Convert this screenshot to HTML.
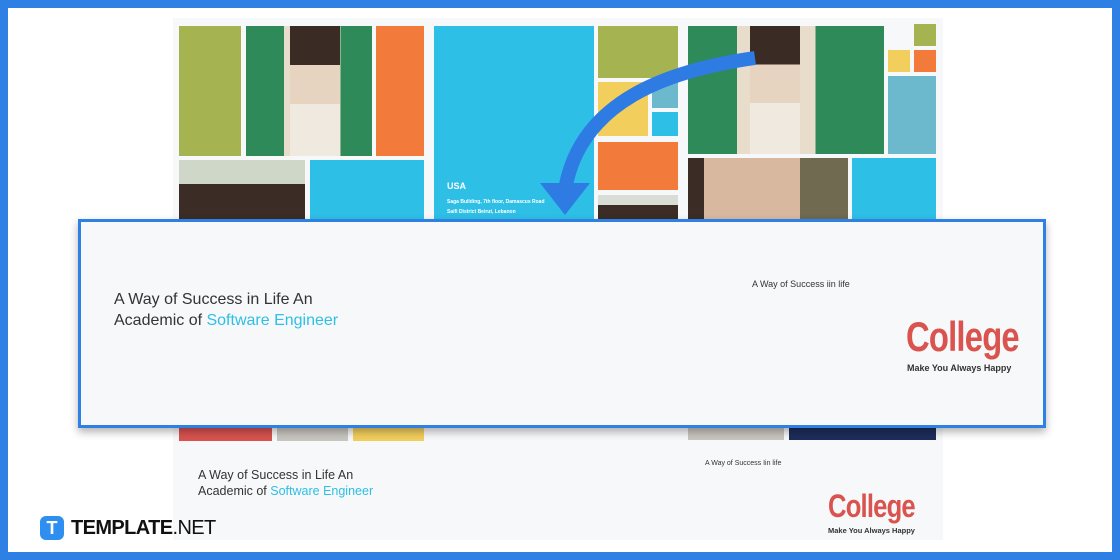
<!DOCTYPE html>
<html><head><meta charset="utf-8"><style>
*{margin:0;padding:0;box-sizing:border-box}
body{width:1120px;height:560px;position:relative;overflow:hidden;background:#fff;font-family:"Liberation Sans",sans-serif}
.a{position:absolute}
.frame{left:0;top:0;width:1120px;height:560px;border:8px solid #2f80e4}
.card{left:173px;top:18px;width:770px;height:522px;background:#f7f8f9}
.t{color:#333}
.c{color:#d9534f;font-weight:bold;letter-spacing:-1px;transform-origin:0 0;white-space:nowrap}
</style></head><body>
<div class="a card"></div>
<div class="a" style="left:179px;top:26px;width:62px;height:130px;background:#a5b350"></div>
<div class="a" style="left:246px;top:26px;width:126px;height:130px;background:linear-gradient(90deg,#2f8a5a 0 30%,#e8dccb 30% 75%,#2f8a5a 75%)"></div>
<div class="a" style="left:290px;top:26px;width:50px;height:130px;background:linear-gradient(#3a2b25 0 30%,#e6d3c0 30% 60%,#efe9e0 60%)"></div>
<div class="a" style="left:376px;top:26px;width:48px;height:130px;background:#f27a3a"></div>
<div class="a" style="left:179px;top:160px;width:126px;height:60px;background:linear-gradient(#cfd7c8 0 40%,#3b2c25 40%)"></div>
<div class="a" style="left:310px;top:160px;width:114px;height:60px;background:#2dbfe5"></div>
<div class="a" style="left:434px;top:26px;width:160px;height:194px;background:#2dbfe5"></div>
<div class="a" style="left:447px;top:181px;color:#fff;font-size:9px;font-weight:bold">USA</div>
<div class="a" style="left:447px;top:197px;color:#fff;font-size:5px;font-weight:bold;line-height:10px">Saga Building, 7th floor, Damascus Road<br>Saifi District Beirut, Lebanon</div>
<div class="a" style="left:598px;top:26px;width:80px;height:52px;background:#a5b350"></div>
<div class="a" style="left:598px;top:82px;width:50px;height:54px;background:#f2cf5c"></div>
<div class="a" style="left:652px;top:82px;width:26px;height:26px;background:#6cb8cc"></div>
<div class="a" style="left:652px;top:112px;width:26px;height:24px;background:#2dbfe5"></div>
<div class="a" style="left:598px;top:142px;width:80px;height:48px;background:#f27a3a"></div>
<div class="a" style="left:598px;top:195px;width:80px;height:25px;background:linear-gradient(#d8ddd8 0 40%,#3b2c25 40%)"></div>
<div class="a" style="left:688px;top:26px;width:196px;height:128px;background:linear-gradient(90deg,#2f8a5a 0 25%,#e8dccb 25% 65%,#2f8a5a 65%)"></div>
<div class="a" style="left:750px;top:26px;width:50px;height:128px;background:linear-gradient(#3a2b25 0 30%,#e6d3c0 30% 60%,#efe9e0 60%)"></div>
<div class="a" style="left:914px;top:24px;width:22px;height:22px;background:#a5b350"></div>
<div class="a" style="left:888px;top:50px;width:22px;height:22px;background:#f2cf5c"></div>
<div class="a" style="left:914px;top:50px;width:22px;height:22px;background:#f27a3a"></div>
<div class="a" style="left:888px;top:76px;width:48px;height:78px;background:#6cb8cc"></div>
<div class="a" style="left:688px;top:158px;width:160px;height:62px;background:linear-gradient(90deg,#3b2c25 0 10%,#d9b8a0 10% 70%,#6f6a50 70%)"></div>
<div class="a" style="left:852px;top:158px;width:84px;height:62px;background:#2dbfe5"></div>
<div class="a" style="left:179px;top:426px;width:93px;height:15px;background:#d9534f"></div>
<div class="a" style="left:277px;top:426px;width:71px;height:15px;background:#c9c6c0"></div>
<div class="a" style="left:353px;top:426px;width:71px;height:15px;background:#f2cf5c"></div>
<div class="a" style="left:688px;top:426px;width:96px;height:14px;background:#c9c6c0"></div>
<div class="a" style="left:789px;top:426px;width:147px;height:14px;background:#1e2d5c"></div>
<div class="a t" style="left:198px;top:467px;font-size:12.5px;line-height:16px">A Way of Success in Life An<br>Academic of <span style="color:#2dbfe5">Software Engineer</span></div>
<div class="a t" style="left:705px;top:460px;font-size:7px">A Way of Success Iin life</div>
<div class="a c" style="left:828px;top:488px;font-size:32px;line-height:36px;transform:scaleX(0.8)">College</div>
<div class="a t" style="left:828px;top:526px;font-size:7.5px;font-weight:bold">Make You Always Happy</div>
<svg class="a" style="left:0;top:0" width="1120" height="560"><path d="M755 58 C670 70 580 100 565 190" fill="none" stroke="#2f7be4" stroke-width="14"/><polygon points="540,183 590,183 565,215" fill="#2f7be4"/></svg>
<div class="a" style="left:78px;top:219px;width:968px;height:209px;background:#f7f8f9;border:3px solid #2f80e4;box-shadow:0 4px 8px rgba(0,0,0,.3)"></div>
<div class="a t" style="left:114px;top:289px;font-size:16px;line-height:21px">A Way of Success in Life An<br>Academic of <span style="color:#2dbfe5">Software Engineer</span></div>
<div class="a t" style="left:752px;top:279px;font-size:9px">A Way of Success iin life</div>
<div class="a c" style="left:906px;top:313px;font-size:42px;line-height:48px;transform:scaleX(0.78)">College</div>
<div class="a t" style="left:907px;top:363px;font-size:9px;font-weight:bold">Make You Always Happy</div>
<div class="a frame"></div>
<div class="a" style="left:40px;top:516px;width:24px;height:24px;border-radius:6px;background:#2f8ff0;color:#fff;font-weight:bold;font-size:18px;text-align:center;line-height:24px">T</div>
<div class="a" style="left:71px;top:514px;font-size:20px;line-height:28px;color:#111;font-weight:bold;letter-spacing:-0.6px">TEMPLATE<span style="font-weight:normal">.NET</span></div>
</body></html>
